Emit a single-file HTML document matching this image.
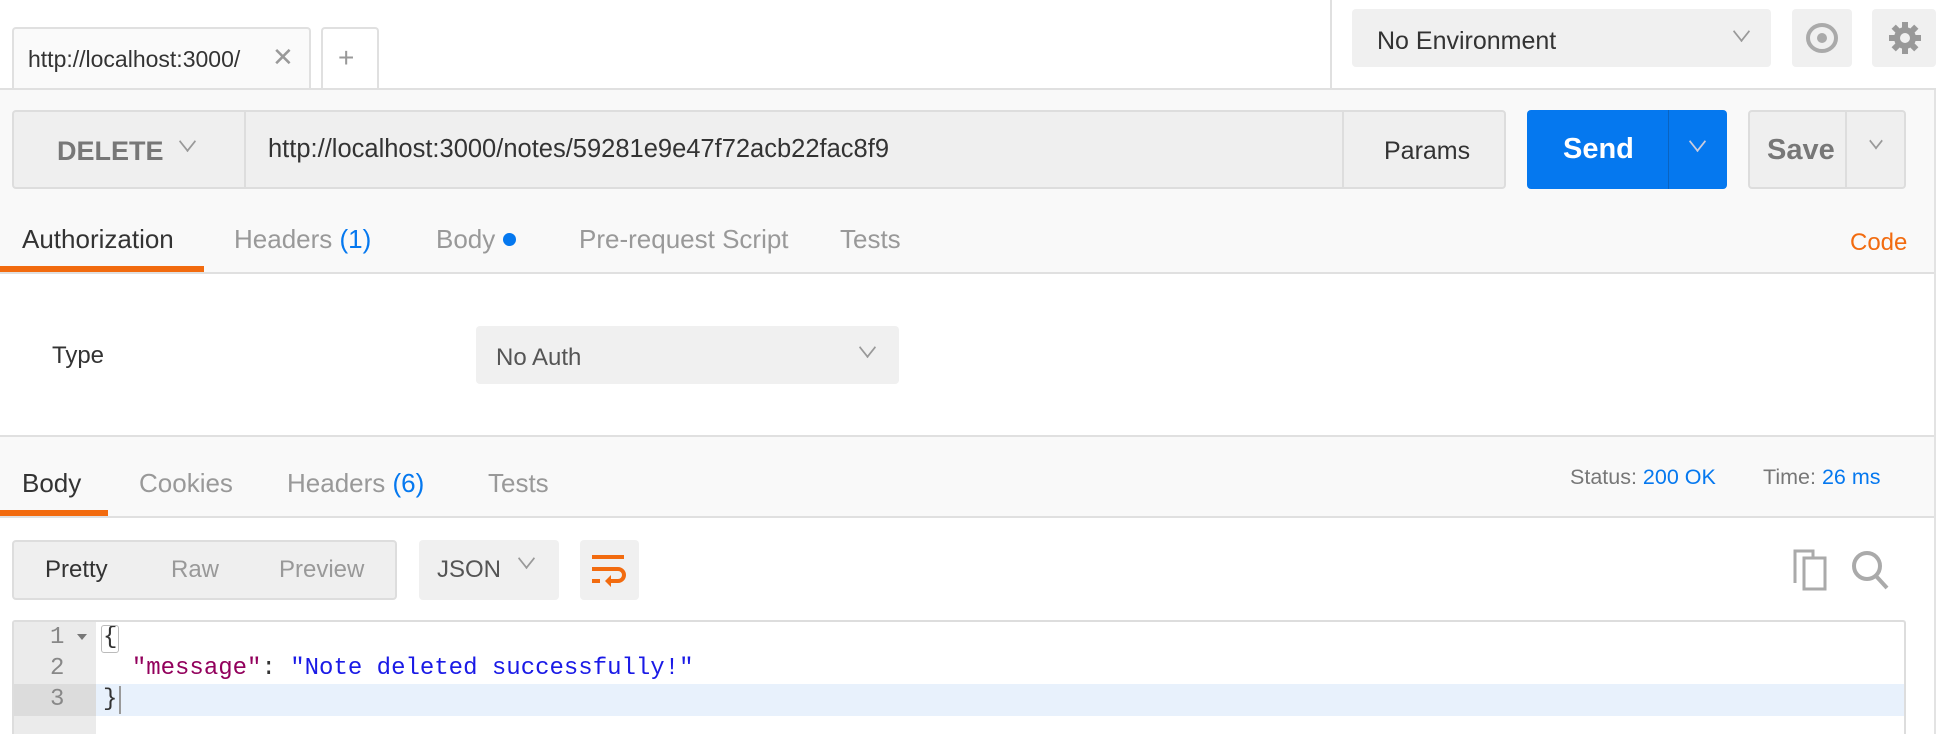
<!DOCTYPE html>
<html><head><meta charset="utf-8"><style>
*{box-sizing:border-box;margin:0;padding:0}
body{width:1936px;height:734px;overflow:hidden;background:#fff;font-family:"Liberation Sans",Arial,sans-serif;font-size:25px;color:#505050;position:relative}
.a{position:absolute}
.gbox{background:#f0f0f0;border-radius:4px}
.chev{position:absolute;width:15px;height:15px;border-right:2px solid #999;border-bottom:2px solid #999;transform:scaleX(0.8) rotate(45deg)}
</style></head><body>
<div class="a" style="left:12px;top:27px;width:299px;height:63px;background:#fafafa;border:2px solid #e0e0e0;border-bottom:none;border-radius:4px 4px 0 0"></div>
<div class="a" style="left:28px;top:46px;font-size:23px;color:#333">http://localhost:3000/</div>
<div class="a" style="left:272px;top:42px;font-size:26px;color:#999">✕</div>
<div class="a" style="left:321px;top:27px;width:58px;height:62px;border:2px solid #e0e0e0;border-bottom:none;border-radius:4px 4px 0 0"></div>
<div class="a" style="left:338px;top:42px;font-size:28px;color:#999">+</div>
<div class="a" style="left:1330px;top:0;width:2px;height:89px;background:#e0e0e0"></div>
<div class="a gbox" style="left:1352px;top:9px;width:419px;height:58px"></div>
<div class="a" style="left:1377px;top:27px;font-size:25px;color:#333">No Environment</div>
<div class="chev" style="left:1734px;top:24px"></div>
<div class="a gbox" style="left:1792px;top:9px;width:60px;height:58px"></div>
<svg class="a" style="left:1806px;top:22px" width="32" height="32" viewBox="0 0 32 32"><ellipse cx="16" cy="16" rx="14" ry="13" fill="none" stroke="#aaa" stroke-width="4"/><circle cx="16" cy="16" r="5" fill="#aaa"/></svg>
<div class="a gbox" style="left:1872px;top:9px;width:64px;height:58px"></div>
<svg class="a" style="left:1887px;top:20px" width="36" height="36" viewBox="0 0 36 36"><g fill="#999"><circle cx="18" cy="18" r="11"/><rect x="15" y="2" width="6" height="32"/><rect x="2" y="15" width="32" height="6"/><rect x="15" y="2" width="6" height="32" transform="rotate(45 18 18)"/><rect x="15" y="2" width="6" height="32" transform="rotate(-45 18 18)"/></g><circle cx="18" cy="18" r="5" fill="#f0f0f0"/></svg>
<div class="a" style="left:0;top:88px;width:1936px;height:2px;background:#e0e0e0"></div>
<div class="a" style="left:0;top:90px;width:1934px;height:183px;background:#f9f9f9"></div>
<div class="a" style="left:1934px;top:90px;width:2px;height:644px;background:#e3e3e3"></div>
<div class="a" style="left:12px;top:110px;width:1494px;height:79px;background:#efefef;border:2px solid #ddd;border-radius:4px"></div>
<div class="a" style="left:244px;top:112px;width:2px;height:75px;background:#ddd"></div>
<div class="a" style="left:1342px;top:112px;width:2px;height:75px;background:#ddd"></div>
<div class="a" style="left:57px;top:136px;font-weight:bold;color:#777;font-size:27px">DELETE</div>
<div class="chev" style="left:180px;top:134px"></div>
<div class="a" style="left:268px;top:135px;color:#333;font-size:25.5px">http://localhost:3000/notes/59281e9e47f72acb22fac8f9</div>
<div class="a" style="left:1384px;top:137px;color:#333;font-size:25px">Params</div>
<div class="a" style="left:1527px;top:110px;width:200px;height:79px;background:#0578ef;border-radius:4px"></div>
<div class="a" style="left:1668px;top:110px;width:1px;height:79px;background:#0a63c0"></div>
<div class="a" style="left:1563px;top:133px;color:#fff;font-weight:bold;font-size:29px">Send</div>
<div class="chev" style="left:1690px;top:134px;border-color:#ccd"></div>
<div class="a" style="left:1748px;top:110px;width:158px;height:79px;background:#efefef;border:2px solid #ddd;border-radius:4px"></div>
<div class="a" style="left:1845px;top:112px;width:2px;height:75px;background:#ddd"></div>
<div class="a" style="left:1767px;top:134px;color:#777;font-weight:bold;font-size:29px">Save</div>
<div class="chev" style="left:1870px;top:135px;width:12px;height:12px"></div>
<div class="a" style="left:22px;top:224px;color:#333;font-size:26px">Authorization</div>
<div class="a" style="left:234px;top:224px;color:#999;font-size:26px">Headers <span style="color:#0578ef">(1)</span></div>
<div class="a" style="left:436px;top:224px;color:#999;font-size:26px">Body</div>
<div class="a" style="left:503px;top:233px;width:13px;height:13px;border-radius:50%;background:#0578ef"></div>
<div class="a" style="left:579px;top:224px;color:#999;font-size:26px">Pre-request Script</div>
<div class="a" style="left:840px;top:224px;color:#999;font-size:26px">Tests</div>
<div class="a" style="left:1850px;top:229px;color:#f26b0f;font-size:24px">Code</div>
<div class="a" style="left:0;top:266px;width:204px;height:6px;background:#f26b0f"></div>
<div class="a" style="left:0;top:272px;width:1934px;height:2px;background:#e0e0e0"></div>
<div class="a" style="left:52px;top:342px;color:#333;font-size:24px">Type</div>
<div class="a gbox" style="left:476px;top:326px;width:423px;height:58px"></div>
<div class="a" style="left:496px;top:344px;color:#555;font-size:24px">No Auth</div>
<div class="chev" style="left:860px;top:340px"></div>
<div class="a" style="left:0;top:435px;width:1934px;height:2px;background:#e0e0e0"></div>
<div class="a" style="left:0;top:437px;width:1934px;height:79px;background:#f9f9f9"></div>
<div class="a" style="left:22px;top:468px;color:#333;font-size:26px">Body</div>
<div class="a" style="left:139px;top:468px;color:#999;font-size:26px">Cookies</div>
<div class="a" style="left:287px;top:468px;color:#999;font-size:26px">Headers <span style="color:#0578ef">(6)</span></div>
<div class="a" style="left:488px;top:468px;color:#999;font-size:26px">Tests</div>
<div class="a" style="left:1570px;top:465px;font-size:21.5px;color:#777">Status: <span style="color:#0578ef">200 OK</span></div>
<div class="a" style="left:1763px;top:465px;font-size:21.5px;color:#777">Time: <span style="color:#0578ef">26 ms</span></div>
<div class="a" style="left:0;top:510px;width:108px;height:6px;background:#f26b0f"></div>
<div class="a" style="left:0;top:516px;width:1934px;height:2px;background:#e0e0e0"></div>
<div class="a" style="left:12px;top:540px;width:385px;height:60px;background:#efefef;border:2px solid #ddd;border-radius:4px"></div>
<div class="a" style="left:45px;top:556px;color:#333;font-size:24px">Pretty</div>
<div class="a" style="left:171px;top:556px;color:#999;font-size:24px">Raw</div>
<div class="a" style="left:279px;top:556px;color:#999;font-size:24px">Preview</div>
<div class="a gbox" style="left:419px;top:540px;width:140px;height:60px"></div>
<div class="a" style="left:437px;top:556px;color:#555;font-size:24px">JSON</div>
<div class="chev" style="left:519px;top:551px"></div>
<div class="a gbox" style="left:580px;top:540px;width:59px;height:60px"></div>
<svg class="a" style="left:590px;top:553px" width="36" height="36" viewBox="0 0 36 36"><g fill="none" stroke="#f26b0f" stroke-width="4"><path d="M2 4h32"/><path d="M2 16h26a6 6 0 0 1 0 12h-10"/><path d="M2 28h8"/></g><path d="M21 22l-6 6 6 6z" fill="#f26b0f"/></svg>
<svg class="a" style="left:1793px;top:549px" width="36" height="42" viewBox="0 0 36 42"><g fill="none" stroke="#aaa" stroke-width="3"><path d="M2 34V2h18v6"/><rect x="11" y="9" width="21" height="31"/></g></svg>
<svg class="a" style="left:1851px;top:549px" width="40" height="42" viewBox="0 0 40 42"><g fill="none" stroke="#aaa" stroke-width="4"><circle cx="16" cy="17" r="13"/><path d="M25 27l11 12"/></g></svg>
<div class="a" style="left:12px;top:620px;width:1894px;height:114px;border:2px solid #ddd;border-bottom:none;border-radius:3px 3px 0 0"></div>
<div class="a" style="left:14px;top:622px;width:82px;height:112px;background:#ebebeb"></div>
<div class="a" style="left:96px;top:684px;width:1808px;height:32px;background:#e8f1fc"></div>
<div class="a" style="left:14px;top:684px;width:82px;height:32px;background:#dcdcdc"></div>
<div class="a" style="font-family:'Liberation Mono',monospace;font-size:24px;line-height:31px;left:50px;top:622px;color:#888">1<br>2<br>3</div>
<div class="a" style="left:77px;top:634px;border:5px solid transparent;border-top:6px solid #777"></div>
<div class="a" style="font-family:'Liberation Mono',monospace;font-size:24px;line-height:31px;left:103px;top:622px;color:#333;white-space:pre">{
  <span style="color:#92005c">"message"</span>: <span style="color:#1a1ae6">"Note deleted successfully!"</span>
}</div>
<div class="a" style="left:101px;top:625px;width:18px;height:28px;border:1px solid #bbb;border-radius:3px"></div>
<div class="a" style="left:119px;top:686px;width:2px;height:28px;background:#999"></div>
</body></html>
